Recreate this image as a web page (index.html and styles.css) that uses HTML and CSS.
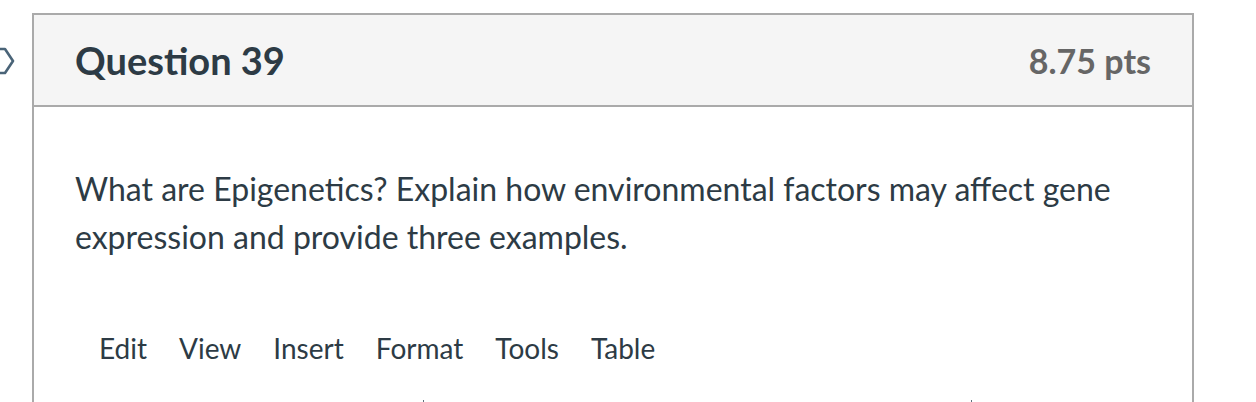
FILE: index.html
```html
<!DOCTYPE html>
<html lang="en">
<head>
<meta charset="utf-8">
<title>Question 39</title>
<link rel="stylesheet" href="styles.css">
</head>
<body>
<div class="page">
  <svg class="flag" width="16" height="30" viewBox="0 0 16 30" aria-hidden="true">
    <path d="M-2 3 L5 3 L13 15 L5 27 L-2 27" fill="none" stroke="#4a6478" stroke-width="2.6" stroke-linejoin="round"/>
  </svg>
  <div class="question">
    <div class="q-header">
      <h2 class="q-title">Question 39</h2>
      <div class="q-points">8.75 pts</div>
    </div>
    <div class="q-body">
      <p class="q-text">What are Epigenetics? Explain how environmental factors may affect gene expression and provide three examples.</p>
      <div class="editor">
        <div class="menubar">
          <span class="menu-item">Edit</span>
          <span class="menu-item">View</span>
          <span class="menu-item">Insert</span>
          <span class="menu-item">Format</span>
          <span class="menu-item">Tools</span>
          <span class="menu-item">Table</span>
        </div>
        <div class="toolbar">
          <div class="tb-group tb-first"></div>
          <div class="tb-group tb-second"></div>
          <div class="tb-group tb-third"></div>
        </div>
      </div>
    </div>
  </div>
</div>
</body>
</html>
```
FILE: styles.css
```css
html, body {
  margin: 0;
  padding: 0;
  background: #ffffff;
  overflow: hidden;
}
body {
  font-family: Lato, "Open Sans", sans-serif;
  color: #2d3b45;
}
.page {
  position: relative;
  padding: 13px 0 0 32px;
  width: 1162px;
}
.flag {
  position: absolute;
  left: 0;
  top: 46px;
}
.question {
  border: 2px solid #aaaaaa;
  border-bottom: none;
  height: 400px;
}
.q-header {
  display: flex;
  justify-content: space-between;
  align-items: center;
  height: 90px;
  padding: 0 41px;
  background: #f5f5f5;
  border-bottom: 2px solid #aaaaaa;
}
.q-title {
  margin: 0;
  font-size: 38px;
  font-weight: 700;
  color: #2d3b45;
}
.q-points {
  font-size: 34px;
  font-weight: 700;
  color: #666666;
}
.q-body {
  padding: 58px 41px 0 41px;
}
.q-text {
  margin: 0;
  font-size: 32px;
  line-height: 48px;
  color: #2d3b45;
}
.editor {
  margin-top: 67px;
  padding-left: 24px;
}
.menubar {
  display: flex;
  gap: 32px;
  font-size: 28px;
  line-height: 40px;
  color: #2d3b45;
}
.toolbar {
  display: flex;
  margin-top: 32px;
}
.tb-group {
  height: 20px;
}
.tb-first {
  width: 324px;
}
.tb-second {
  width: 547px;
  border-left: 1px solid #5f6e7b;
}
.tb-third {
  width: 100px;
  border-left: 1px solid #5f6e7b;
}
```
